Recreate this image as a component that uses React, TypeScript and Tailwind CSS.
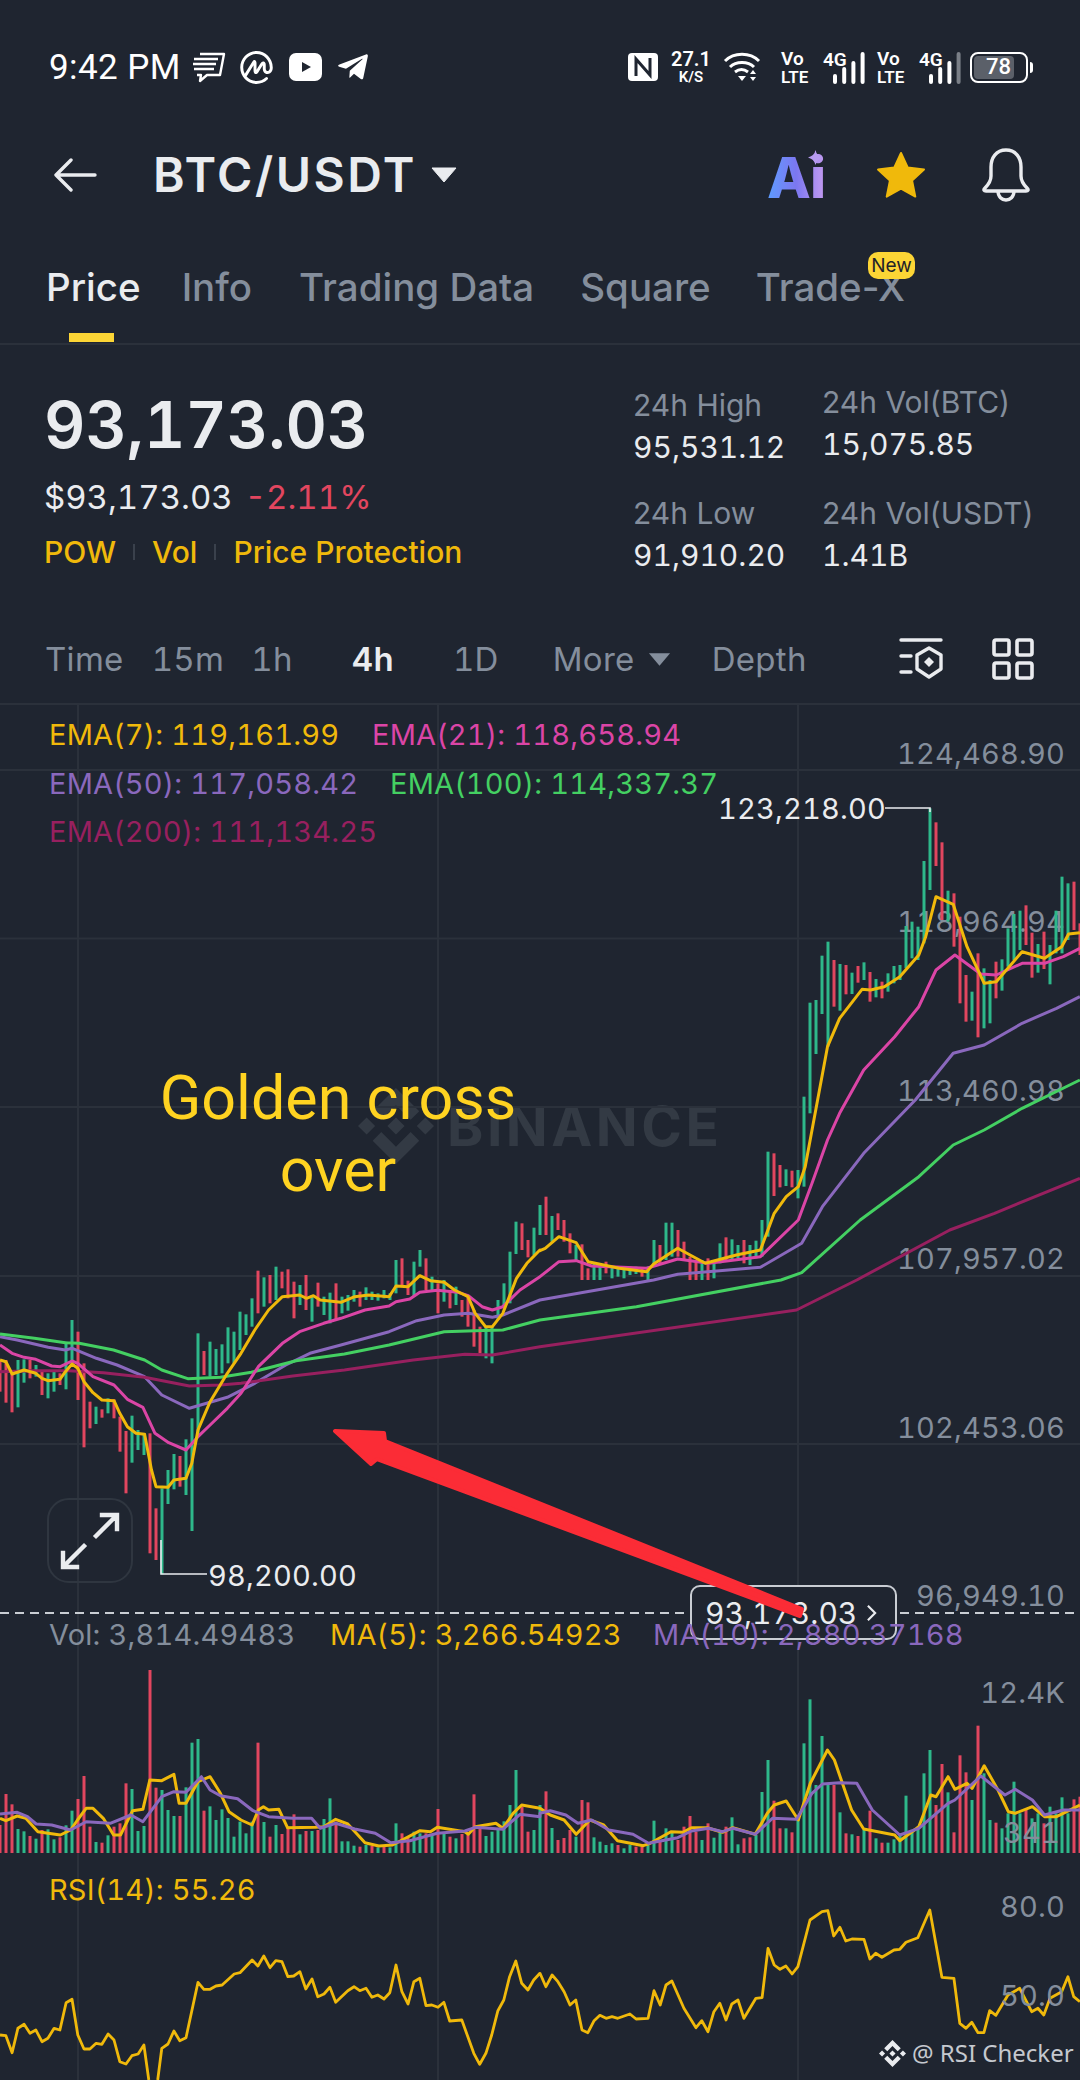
import { SiBinance, SiCoinmarketcap } from 'react-icons/si';
import { FaTelegramPlane } from 'react-icons/fa';

// candle bars are [top, bottom], negative top = red. Values are read off the crops
// so they go through a scale below instead of being raw page pixels
const candlesLeft: number[][] = [
  [-630, 725], [-630, 758], [-670, 787], [630, 772], [628, 698], [-630, 685], [645, 680], [-660, 735], [670, 745], [660, 725],
  [-670, 705], [575, 718], [510, 640], [-545, 750], [-640, 892], [-755, 835], [770, 822], [-778, 803], [745, 790], [-748, 805],
  [-800, 905], [-843, 1030], [797, 938], [840, 900], [850, 915], [-850, 1210], [-1075, 1230], [1015, 1273], [960, 1062], [912, 1018],
  [-918, 1010], [868, 1035], [805, 1143], [550, 860], [-603, 675], [575, 680], [597, 675], [583, 670], [532, 640], [545, 640],
  [485, 600], [493, 555], [445, 530], [-362, 490], [382, 470], [-375, 460], [350, 450], [-365, 415], [-358, 445], [-395, 505],
  [405, 465], [-375, 480], [435, 515], [-398, 470], [440, 495], [428, 520], [-400, 510], [440, 490], [435, 482], [420, 455],
  [-425, 470], [412, 450], [425, 450], [430, 452], [420, 445], [430, 450], [330, 430], [-325, 405], [-392, 435], [335, 440],
  [300, 350], [-325, 420], [380, 425], [-400, 490], [390, 455], [-420, 475], [410, 465], [-450, 500], [-440, 530], [-480, 590],
  [-530, 610], [530, 625], [530, 640], [450, 510], [400, 470], [305, 460], [215, 312], [-220, 300], [-270, 322], [233, 315],
];

const candlesRight: number[][] = [
  [1275, 1365], [-1250, 1365], [1308, 1385], [-1300, 1350], [-1320, 1385], [-1360, 1420], [1395, 1440], [-1393, 1500], [-1465, 1500], [1450, 1500],
  [1450, 1500], [-1445, 1480], [1460, 1495], [1460, 1490], [1465, 1495], [1460, 1485], [1460, 1482], [-1465, 1490], [1460, 1500], [1380, 1460],
  [-1395, 1455], [1328, 1440], [1328, 1430], [-1350, 1430], [-1385, 1440], [-1430, 1500], [-1445, 1500], [1440, 1500], [-1435, 1500], [1440, 1495],
  [1390, 1450], [-1372, 1445], [1378, 1440], [1395, 1435], [-1380, 1450], [1395, 1455], [1382, 1435], [1320, 1430], [1115, 1370], [-1120, 1248],
  [-1155, 1222], [1168, 1218], [-1172, 1222], [1170, 1255], [950, 1220], [668, 1000], [660, 822], [527, 702], [485, 800], [-540, 680],
  [552, 692], [-555, 643], [578, 642], [-558, 608], [547, 600], [-576, 665], [597, 652], [-605, 655], [580, 635], [558, 610],
  [555, 600], [438, 565], [425, 535], [440, 540], [243, 490], [85, 330], [-127, 258], [-187, 420], [332, 425], [-340, 500],
  [-410, 670], [-585, 725], [635, 722], [-520, 772], [565, 745], [600, 730], [-545, 655], [538, 632], [445, 560], [402, 540],
  [392, 510], [-376, 495], [-458, 593], [492, 578], [-455, 567], [495, 613], [392, 520], [290, 520], [310, 480], [-305, 450], [-430, 525],
];

const volumes = [
  -675, -582, -613, 687, 694, -708, 716, -690, 688, 718,
  -712, 676, 632, -597, -528, -680, 726, -728, 706, -680,
  -670, -550, 567, 693, 678, -210, -563, 570, 630, 648,
  -648, 562, 428, 417, -632, 619, 660, 628, 654, 710,
  665, 700, 665, -428, 666, -710, 675, -702, -680, -643,
  703, -693, 693, -690, 657, 595, -665, 724, 724, 737,
  -740, 735, -738, 742, -740, 742, 670, -700, -712, 695,
  700, -700, 705, -627, 700, -710, 715, -702, -705, -583,
  -680, 708, 695, 690, 664, 615, 510, -620, -695, 690,
  615, -574, 684, -720, -714, -690, 710, -600, -607, 712,
  725, 735, 730, -735, 745, 735, -740, -740, 735, 662,
  -720, 685, 695, -720, -680, -648, -695, 720, -670, 713,
  690, -680, 652, 733, -715, -712, 705, 576, 480, -602,
  -685, 685, -697, 660, 430, 298, 555, 408, 555, -555,
  637, -700, 703, -708, 690, -632, 715, -728, 728, 718,
  705, 587, 690, 680, 520, 450, -615, -492, 577, -697,
  -466, -517, 600, -377, 520, 660, -668, 685, 640, 545,
  640, -630, 655, 640, -670, 620, 640, 592, 640, -598, -590,
];

const scale = 2.904;
const leftY = (v: number) => 1150 + v / 3;
const rightY = (v: number) => 780 + v / 3;
const lowY = (v: number) => 1600 + v / 3;

type Pts = number[];

function toPoints(pts: Pts, baseX: number, mapY: (v: number) => number) {
  const out: string[] = [];
  for (let i = 0; i < pts.length; i += 2) {
    out.push(`${(baseX + pts[i] / scale).toFixed(1)},${mapY(pts[i + 1]).toFixed(1)}`);
  }
  return out.join(' ');
}

const emaLines = [
  {
    color: '#8a68bd',
    left: [0, 560, 50, 570, 140, 592, 190, 600, 210, 595, 280, 625, 340, 645, 420, 680, 470, 735, 550, 775, 600, 760, 660, 742, 740, 700, 830, 645, 900, 610, 990, 585, 1130, 545, 1210, 512, 1290, 495, 1360, 490, 1430, 502, 1460, 495, 1568, 450],
    right: [330, 1500, 400, 1483, 640, 1462, 760, 1390, 820, 1280, 940, 1120, 1090, 960, 1200, 820, 1290, 795, 1400, 730, 1500, 685, 1568, 650],
  },
  {
    color: '#44d062',
    left: [0, 552, 100, 565, 190, 578, 230, 580, 330, 600, 420, 630, 470, 660, 545, 686, 640, 682, 730, 667, 860, 632, 1000, 612, 1130, 585, 1290, 545, 1380, 542, 1460, 540, 1568, 510],
    right: [280, 1580, 700, 1500, 760, 1478, 930, 1320, 1100, 1190, 1200, 1095, 1290, 1050, 1400, 985, 1568, 900],
  },
  {
    color: '#97205f',
    left: [0, 665, 100, 662, 200, 662, 300, 668, 420, 682, 550, 708, 640, 705, 700, 700, 850, 678, 1000, 660, 1200, 630, 1350, 613, 1430, 615, 1568, 590],
    right: [745, 1590, 920, 1500, 1190, 1350, 1320, 1300, 1568, 1195],
  },
  {
    color: '#db45a6',
    left: [0, 585, 35, 610, 70, 622, 104, 628, 150, 648, 175, 650, 209, 633, 226, 640, 270, 680, 331, 705, 370, 748, 415, 772, 450, 850, 490, 878, 540, 900, 575, 860, 610, 825, 660, 775, 700, 730, 750, 650, 820, 580, 870, 545, 940, 520, 990, 505, 1060, 480, 1130, 468, 1150, 455, 1190, 447, 1219, 427, 1270, 421, 1330, 427, 1360, 437, 1400, 470, 1430, 480, 1460, 470, 1510, 420, 1568, 380],
    right: [0, 1490, 55, 1445, 105, 1442, 150, 1458, 310, 1465, 400, 1437, 490, 1450, 640, 1430, 750, 1320, 790, 1210, 835, 1080, 870, 1000, 940, 870, 1030, 770, 1100, 680, 1150, 570, 1205, 525, 1280, 582, 1325, 585, 1400, 550, 1465, 550, 1520, 530, 1568, 505],
  },
  {
    color: '#f0b90b',
    left: [0, 630, 17, 635, 35, 672, 70, 660, 104, 670, 122, 685, 139, 692, 174, 688, 190, 665, 209, 642, 226, 655, 244, 695, 270, 728, 296, 750, 331, 752, 348, 790, 370, 830, 395, 850, 420, 853, 440, 960, 453, 1010, 488, 1012, 505, 990, 540, 985, 557, 940, 575, 840, 610, 755, 660, 670, 700, 610, 740, 540, 780, 480, 820, 440, 870, 435, 890, 445, 910, 437, 930, 450, 990, 457, 1030, 440, 1070, 435, 1130, 440, 1150, 408, 1185, 410, 1219, 377, 1250, 392, 1290, 397, 1320, 420, 1359, 440, 1380, 490, 1410, 530, 1430, 530, 1460, 490, 1500, 385, 1530, 340, 1568, 300],
    right: [0, 1412, 15, 1405, 55, 1370, 105, 1388, 140, 1445, 230, 1465, 310, 1475, 330, 1452, 400, 1405, 480, 1450, 570, 1425, 640, 1410, 680, 1300, 715, 1250, 750, 1220, 770, 1160, 835, 800, 870, 715, 935, 628, 960, 630, 1000, 620, 1045, 590, 1100, 525, 1120, 470, 1150, 350, 1200, 373, 1240, 500, 1290, 610, 1325, 605, 1400, 515, 1465, 535, 1515, 500, 1535, 462, 1568, 458],
  },
];

const ma5Left = [0, 655, 17, 662, 50, 648, 75, 655, 110, 695, 140, 700, 175, 705, 205, 690, 225, 660, 250, 625, 270, 625, 300, 655, 330, 705, 350, 705, 385, 632, 415, 628, 435, 540, 470, 542, 505, 523, 520, 610, 540, 610, 575, 545, 610, 530, 640, 580, 665, 635, 700, 660, 732, 675, 750, 630, 765, 620, 780, 630, 810, 628, 835, 683, 915, 682, 940, 680, 975, 658, 1010, 672, 1060, 728, 1100, 738, 1140, 735, 1220, 692, 1250, 695, 1270, 682, 1350, 695, 1360, 703, 1380, 680, 1440, 670, 1460, 685, 1490, 640, 1515, 615, 1568, 625];
const ma5Right = [0, 625, 30, 645, 70, 660, 105, 703, 145, 660, 185, 675, 225, 722, 300, 737, 320, 730, 380, 695, 415, 697, 440, 683, 485, 683, 530, 697, 560, 683, 625, 703, 660, 640, 680, 615, 715, 603, 750, 660, 785, 550, 835, 450, 855, 480, 905, 630, 940, 687, 1030, 705, 1045, 722, 1100, 680, 1135, 585, 1150, 590, 1185, 530, 1205, 568, 1240, 550, 1255, 565, 1290, 497, 1330, 570, 1360, 635, 1380, 640, 1430, 620, 1465, 650, 1500, 650, 1568, 615];
const ma10Left = [0, 642, 50, 637, 80, 650, 105, 672, 150, 675, 205, 690, 250, 665, 320, 670, 380, 645, 415, 665, 470, 590, 505, 575, 540, 577, 585, 530, 610, 570, 640, 587, 690, 596, 735, 632, 780, 650, 850, 655, 905, 655, 930, 685, 975, 670, 1030, 687, 1090, 700, 1135, 728, 1190, 722, 1270, 700, 1350, 693, 1380, 682, 1460, 688, 1510, 643, 1568, 650];
const ma10Right = [0, 640, 30, 632, 75, 645, 110, 670, 150, 660, 200, 690, 270, 703, 315, 730, 400, 713, 440, 693, 490, 685, 530, 695, 560, 685, 625, 703, 675, 655, 745, 658, 790, 580, 820, 552, 870, 548, 920, 550, 965, 630, 1045, 705, 1100, 685, 1185, 610, 1205, 600, 1280, 528, 1350, 585, 1380, 568, 1430, 600, 1465, 645, 1520, 630, 1568, 630];
const rsiLeft = [0, 1305, 17, 1307, 35, 1358, 52, 1285, 70, 1273, 87, 1300, 104, 1290, 122, 1325, 139, 1315, 157, 1285, 174, 1290, 192, 1208, 209, 1198, 226, 1305, 244, 1347, 261, 1347, 279, 1330, 296, 1333, 314, 1302, 331, 1320, 348, 1385, 366, 1392, 383, 1367, 401, 1362, 418, 1335, 432, 1440, 445, 1500, 458, 1440, 470, 1345, 488, 1332, 505, 1293, 522, 1322, 540, 1313, 575, 1147, 592, 1168, 610, 1168, 627, 1158, 645, 1155, 680, 1122, 697, 1118, 732, 1080, 749, 1098, 766, 1068, 784, 1103, 801, 1082, 819, 1085, 836, 1130, 853, 1128, 871, 1115, 888, 1167, 906, 1137, 923, 1190, 941, 1182, 958, 1162, 975, 1207, 1010, 1172, 1028, 1160, 1045, 1172, 1063, 1165, 1080, 1192, 1097, 1185, 1115, 1197, 1132, 1178, 1150, 1095, 1167, 1175, 1185, 1212, 1202, 1145, 1219, 1135, 1237, 1217, 1254, 1215, 1272, 1222, 1289, 1207, 1306, 1263, 1341, 1260, 1376, 1360, 1393, 1393, 1411, 1360, 1428, 1305, 1446, 1232, 1463, 1200, 1480, 1130, 1498, 1083, 1515, 1150, 1533, 1170, 1550, 1140, 1568, 1120];
const rsiRight = [0, 1120, 17, 1160, 35, 1125, 52, 1145, 70, 1175, 87, 1215, 104, 1200, 122, 1290, 139, 1298, 157, 1262, 174, 1246, 192, 1255, 209, 1250, 226, 1255, 261, 1242, 279, 1257, 314, 1255, 331, 1172, 349, 1215, 366, 1155, 383, 1143, 418, 1225, 453, 1283, 470, 1262, 488, 1295, 505, 1235, 522, 1210, 540, 1260, 557, 1212, 575, 1200, 592, 1255, 627, 1195, 645, 1193, 662, 1045, 680, 1095, 697, 1108, 714, 1098, 732, 1122, 749, 1100, 784, 960, 819, 935, 836, 932, 853, 1008, 871, 982, 888, 1023, 906, 1017, 941, 1018, 958, 1077, 975, 1060, 993, 1072, 1028, 1050, 1045, 1048, 1063, 1027, 1097, 1013, 1132, 930, 1167, 1132, 1202, 1135, 1219, 1270, 1237, 1285, 1254, 1267, 1272, 1298, 1289, 1298, 1306, 1232, 1324, 1246, 1359, 1185, 1393, 1165, 1428, 1235, 1446, 1225, 1463, 1245, 1481, 1195, 1515, 1175, 1533, 1130, 1550, 1190, 1568, 1205];

const GREEN = '#2eb88a';
const RED = '#e2465f';

function StatusBar() {
  return (
    <div className="flex h-[134px] items-center justify-between pl-[49px] pr-[52px] font-['Roboto',sans-serif] text-white">
      <div className="flex items-center">
        <span className="text-[35px] leading-none tracking-[0.4px]">9:42 PM</span>
        <svg viewBox="0 0 34 32" className="ml-[11px] h-[32px] w-[34px]" fill="none" stroke="white" strokeWidth="2.4">
          <path d="M8 3h24l-4 21H15l-7 6 1-6H5" strokeLinejoin="round" />
          <path d="M2 8h24M1 13h23M2 18h20" />
        </svg>
        <SiCoinmarketcap className="ml-[14px] h-[33px] w-[33px]" />
        <svg viewBox="0 0 33 28" className="ml-[16px] h-[28px] w-[33px]">
          <rect width="33" height="28" rx="7" fill="white" />
          <path d="M13 9l9 5-9 5z" fill="#1f2530" />
        </svg>
        <FaTelegramPlane className="ml-[14px] h-[34px] w-[34px]" />
      </div>
      <div className="flex items-center">
        <svg viewBox="0 0 30 28" className="h-[28px] w-[30px]">
          <rect width="30" height="28" rx="4" fill="white" />
          <path d="M8 23V6l14 16V5" fill="none" stroke="#1f2530" strokeWidth="3" />
        </svg>
        <div className="ml-[14px] flex w-[38px] flex-col items-center font-semibold leading-none">
          <span className="text-[20px] leading-[20px]">27.1</span>
          <span className="text-[15px] leading-[17px]">K/S</span>
        </div>
        <svg viewBox="0 0 38 30" className="ml-[13px] h-[30px] w-[38px]" fill="none" stroke="white" strokeWidth="3">
          <path d="M2 9c9-9 25-9 34 0M7 15c6-6 18-6 24 0M12 20c4-3 9-3 13 0" />
          <path d="M15 24h8l-4 5z" fill="white" stroke="none" />
          <path d="M27 22l3-4 3 4zM27 25h6l-3 4z" fill="white" stroke="none" />
        </svg>
        <Signal className="ml-[20px]" level={4} />
        <Signal className="ml-[12px]" level={3} />
        <div className="relative ml-[9px] flex h-[31px] w-[58px] items-center rounded-[8px] border-2 border-white p-[2px]">
          <div className="flex h-full w-[40px] items-center justify-center rounded-[4px] bg-[#5b6069] text-[22px] font-medium leading-none">
            <span className="ml-[9px]">78</span>
          </div>
          <span className="absolute -right-[7px] top-[8px] h-[11px] w-[3px] rounded-r-sm bg-white" />
        </div>
      </div>
    </div>
  );
}

function Signal({ level, className }: { level: number; className: string }) {
  const tops = [76, 69, 63, 54];
  return (
    <div className={`flex items-center ${className}`}>
      <div className="flex w-[30px] flex-col font-semibold leading-none">
        <span className="text-[19px] leading-[19px]">Vo</span>
        <span className="text-[17px] leading-[18px]">LTE</span>
      </div>
      <div className="relative ml-[12px] h-[34px] w-[42px]">
        <span className="absolute left-0 top-0 text-[19px] font-semibold leading-[20px]">4G</span>
        <svg viewBox="0 0 42 34" className="absolute inset-0 h-[34px] w-[42px]">
          {tops.map((t, i) => (
            <line
              key={t}
              x1={12 + i * 9.2}
              x2={12 + i * 9.2}
              y1={t - 50}
              y2={32}
              stroke={i < level ? 'white' : '#7a7f87'}
              strokeWidth="4"
              strokeLinecap="round"
            />
          ))}
        </svg>
      </div>
    </div>
  );
}

function TopBar() {
  return (
    <div className="flex h-[82px] items-center pl-[53px] pr-[49px]">
      <svg viewBox="0 0 44 34" className="h-[34px] w-[44px]" fill="none" stroke="#eaecef" strokeWidth="3.4" strokeLinecap="round" strokeLinejoin="round">
        <path d="M42 17H3M18 2L3 17l15 15" />
      </svg>
      <span className="ml-[56px] text-[48px] font-semibold leading-none tracking-[2.5px] text-[#eaecef]">BTC/USDT</span>
      <svg viewBox="0 0 26 16" className="ml-[14px] h-[16px] w-[26px]">
        <path d="M1 1h24L13 15z" fill="#eaecef" stroke="#eaecef" strokeLinejoin="round" />
      </svg>
      <div className="relative ml-auto h-[48px] w-[56px]">
        <span className="absolute bottom-[-7px] left-0 bg-gradient-to-r from-[#5a9cff] via-[#7b77f0] to-[#c49af0] bg-clip-text text-[57px] font-extrabold leading-none tracking-[-1px] text-transparent">
          Ai
        </span>
        <svg viewBox="0 0 16 16" className="absolute -top-[1px] left-[41px] h-[15px] w-[15px]">
          <path d="M8 0q1 6 8 8-7 2-8 8-1-6-8-8 7-2 8-8z" fill="#b79bf0" />
        </svg>
      </div>
      <svg viewBox="0 0 50 48" className="ml-[53px] h-[48px] w-[50px]">
        <path d="M25 2l6.8 14.6 16.2 2-11.9 11 3.2 16L25 37.7 10.700 45.600l3.200-16L2 18.600l16.200-2z" fill="#f0b90b" stroke="#f0b90b" strokeWidth="2" strokeLinejoin="round" />
      </svg>
      <svg viewBox="0 0 50 54" className="ml-[55px] h-[54px] w-[50px]" fill="none" stroke="#eaecef" strokeWidth="3.4" strokeLinejoin="round">
        <path d="M25 2C15 2 10 10 10 19v9c0 5-2 8-6 12-2 2-1 3 1 3h40c2 0 3-1 1-3-4-4-6-7-6-12v-9c0-9-5-17-15-17z" />
        <path d="M17 43c0 6 4 9 8 9s8-3 8-9" />
      </svg>
    </div>
  );
}

function Tabs() {
  return (
    <div className="relative flex h-[129px] items-start border-b-2 border-[#2b313b] pl-[46px] pt-[48px] text-[38.5px] font-medium leading-[46px] text-[#848e9c]">
      <span className="relative text-[#eaecef]">
        Price
        <span className="absolute left-[23px] top-[69px] h-[9px] w-[45px] bg-[#fcd535]" />
      </span>
      <span className="ml-[41px]">Info</span>
      <span className="ml-[47px]">Trading Data</span>
      <span className="ml-[46px]">Square</span>
      <span className="ml-[45px]">Trade-X</span>
      <span className="absolute left-[868px] top-[36px] flex h-[27px] w-[47px] items-center justify-center rounded-[10px] bg-[#fcd535] text-[19px] font-normal leading-none text-[#1e2329]">
        New
      </span>
    </div>
  );
}

function Stat({ label, value, className = '' }: { label: string; value: string; className?: string }) {
  return (
    <div className="flex flex-col">
      <span className={`h-[42px] text-[#848e9c] leading-[42px] ${className}`}>{label}</span>
      <span className="h-[42px] leading-[42px] text-[#eaecef] tabular-nums">{value}</span>
    </div>
  );
}

function PriceStats() {
  return (
    <div className="flex h-[270px] pl-[44px]">
      <div className="w-[589px] pt-[40px]">
        <div className="text-[64px] font-semibold leading-[80px] text-[#eaecef] tabular-nums">93,173.03</div>
        <div className="flex h-[64px] items-center text-[33px] leading-none tabular-nums">
          <span className="text-[#eaecef]">$93,173.03</span>
          <span className="ml-[12px] text-[#e2465f]">-2.11%</span>
        </div>
        <div className="flex h-[46px] items-center text-[30px] font-medium leading-none text-[#f0b90b]">
          <span>POW</span>
          <span className="ml-[17px] h-[16px] w-[2px] bg-[#3a414c]" />
          <span className="ml-[17px]">Vol</span>
          <span className="ml-[17px] h-[16px] w-[2px] bg-[#3a414c]" />
          <span className="ml-[17px]">Price Protection</span>
        </div>
      </div>
      <div className="grid w-[447px] grid-cols-[189px_1fr] content-start gap-y-[24px] pt-[39px] text-[30px]">
        <Stat label="24h High" value="95,531.12" />
        <Stat label="24h Vol(BTC)" value="15,075.85" className="-mt-[3px]" />
        <Stat label="24h Low" value="91,910.20" />
        <Stat label="24h Vol(USDT)" value="1.41B" />
      </div>
    </div>
  );
}

function Intervals() {
  return (
    <div className="flex h-[90px] items-center border-b-2 border-[#2b313b] pl-[45px] text-[33px] leading-none tracking-[0.3px] text-[#848e9c] tabular-nums">
      <span>Time</span>
      <span className="ml-[28px]">15m</span>
      <span className="ml-[27px]">1h</span>
      <span className="ml-[59px] font-semibold text-[#eaecef]">4h</span>
      <span className="ml-[59px]">1D</span>
      <span className="ml-[54px]">More</span>
      <svg viewBox="0 0 24 15" className="ml-[13px] h-[15px] w-[23px]">
        <path d="M1 1h22L12 14z" fill="#848e9c" />
      </svg>
      <span className="ml-[41px]">Depth</span>
      <svg viewBox="0 0 44 42" className="ml-[92px] h-[42px] w-[44px]" fill="none" stroke="#eaecef" strokeWidth="3.4" strokeLinecap="round">
        <path d="M2 2h40M2 18h10M2 34h10" />
        <path d="M30 10l12 7v14l-12 8-12-8V17z" strokeLinejoin="round" />
        <path d="M30 19l5 5-5 5-5-5z" fill="#eaecef" stroke="none" />
      </svg>
      <svg viewBox="0 0 42 42" className="ml-[49px] h-[42px] w-[42px]" fill="none" stroke="#eaecef" strokeWidth="3.6">
        <rect x="2" y="2" width="15" height="15" rx="2" />
        <rect x="25" y="2" width="15" height="15" rx="2" />
        <rect x="2" y="25" width="15" height="15" rx="2" />
        <rect x="25" y="25" width="15" height="15" rx="2" />
      </svg>
    </div>
  );
}

function ChartDrawing() {
  return (
    <svg viewBox="0 705 1080 1375" className="absolute inset-0 h-[1375px] w-[1080px]">
      {[78, 438, 798].map((x) => (
        <line key={x} x1={x} x2={x} y1={705} y2={2080} stroke="#2b313b" strokeWidth="2" />
      ))}
      {[770, 938.5, 1107, 1276, 1444].map((y) => (
        <line key={y} x1={0} x2={1080} y1={y} y2={y} stroke="#2b313b" strokeWidth="2" />
      ))}

      {candlesLeft.map(([t, b], k) => (
        <rect key={k} x={6 * k - 1.5} y={leftY(Math.abs(t))} width="3" height={(b - Math.abs(t)) / 3} fill={t < 0 ? RED : GREEN} />
      ))}
      {candlesRight.map(([t, b], i) => (
        <rect key={i} x={540 + 6 * i - 1.5} y={rightY(Math.abs(t))} width="3" height={(b - Math.abs(t)) / 3} fill={t < 0 ? RED : GREEN} />
      ))}
      {emaLines.map((l) => (
        <polyline
          key={l.color}
          points={`${toPoints(l.left, 0, leftY)} ${toPoints(l.right, 540, rightY)}`}
          fill="none"
          stroke={l.color}
          strokeWidth="3"
          strokeLinejoin="round"
        />
      ))}

      <path d="M885 808h45v4M161 1540v34h46" fill="none" stroke="#eaecef" strokeWidth="1.6" />
      <line x1={0} x2={1080} y1={1613} y2={1613} stroke="#c9cdd3" strokeWidth="2" strokeDasharray="9 6" />

      {volumes.map((v, k) => (
        <rect key={k} x={6 * k - 1.5} y={lowY(Math.abs(v))} width="3" height={1853 - lowY(Math.abs(v))} fill={v < 0 ? RED : GREEN} />
      ))}
      <polyline points={`${toPoints(ma5Left, 0, lowY)} ${toPoints(ma5Right, 540, lowY)}`} fill="none" stroke="#f0b90b" strokeWidth="3" strokeLinejoin="round" />
      <polyline points={`${toPoints(ma10Left, 0, lowY)} ${toPoints(ma10Right, 540, lowY)}`} fill="none" stroke="#8a68bd" strokeWidth="3" strokeLinejoin="round" />
      <polyline points={`${toPoints(rsiLeft, 0, lowY)} ${toPoints(rsiRight, 540, lowY)}`} fill="none" stroke="#f0b90b" strokeWidth="2.8" strokeLinejoin="round" />
    </svg>
  );
}

function Chart() {
  const axis = ['124,468.90', '118,964.94', '113,460.98', '107,957.02', '102,453.06', '96,949.10'];
  return (
    <div className="relative flex-1 overflow-hidden text-[29px] tracking-[0.2px] tabular-nums">
      {/* axis text and watermark sit under the candles, as in the app */}
      <div className="absolute right-[15px] top-[-36px] flex flex-col items-end text-[#848e9c]">
        {axis.map((a) => (
          <span key={a} className="flex h-[168.5px] items-center">
            {a}
          </span>
        ))}
      </div>
      <div className="absolute left-[358px] top-[383px] flex items-center text-[#333a44]">
        <SiBinance className="h-[76px] w-[76px]" />
        <span className="ml-[13px] text-[55px] font-bold leading-none tracking-[3.5px]">BINANCE</span>
      </div>

      <ChartDrawing />

      <div className="absolute left-[49px] top-[6px] flex flex-col leading-[48.5px]">
        <div className="flex">
          <span className="w-[323px] text-[#f0b90b]">EMA(7): 119,161.99</span>
          <span className="text-[#db45a6]">EMA(21): 118,658.94</span>
        </div>
        <div className="flex">
          <span className="w-[341px] text-[#8a68bd]">EMA(50): 117,058.42</span>
          <span className="text-[#44d062]">EMA(100): 114,337.37</span>
        </div>
        <span className="text-[#97205f]">EMA(200): 111,134.25</span>
      </div>

      <span className="absolute left-[718px] top-[84px] leading-[40px] text-[#eaecef]">123,218.00</span>
      <span className="absolute left-[208px] top-[851px] leading-[40px] text-[#eaecef]">98,200.00</span>

      <div className="absolute left-[130px] top-[357px] w-[416px] text-center font-['Roboto',sans-serif] text-[61px] leading-[72px] tracking-normal text-[#ffd321]">
        Golden cross
        <br />
        over
      </div>

      <div className="absolute left-[47px] top-[793px] h-[85px] w-[86px] rounded-[22px] border-2 border-[#2f3640]">
        <svg viewBox="0 0 86 85" className="absolute -left-[2px] -top-[2px] h-[85px] w-[86px]" fill="none" stroke="#eaecef" strokeWidth="4.4" strokeLinecap="square">
          <path d="M55 17h15v14M69 18L49 38M16 55v14h14M17 68l20-20" />
        </svg>
      </div>

      <div className="absolute left-[690px] top-[880px] flex h-[55px] w-[207px] items-center rounded-[10px] border-2 border-[#c9cdd3] bg-[#1f2530] pl-[13px] text-[30px] leading-none tracking-normal text-[#eaecef]">
        93,173.03
        <svg viewBox="0 0 12 20" className="ml-[9px] h-[18px] w-[11px]" fill="none" stroke="#eaecef" strokeWidth="2.4">
          <path d="M2 2l8 8-8 8" />
        </svg>
      </div>

      {/* hand-drawn arrow from the screenshot, on top of the price tag */}
      <svg viewBox="0 705 1080 1375" className="absolute inset-0 h-[1375px] w-[1080px]">
        <polygon
          points="335,1431 384,1433 385,1441 802,1609 800,1616 377,1459 371,1464"
          fill="#fb2c36"
          stroke="#fb2c36"
          strokeWidth="4"
          strokeLinejoin="round"
        />
      </svg>

      <div className="absolute left-[49px] top-[911px] flex leading-[38px]">
        <span className="w-[281px] text-[#848e9c]">Vol: 3,814.49483</span>
        <span className="w-[323px] text-[#f0b90b]">MA(5): 3,266.54923</span>
        <span className="text-[#8a68bd]">MA(10): 2,880.37168</span>
      </div>
      <span className="absolute right-[15px] top-[968px] leading-[40px] text-[#848e9c]">12.4K</span>
      <span className="absolute right-[20px] top-[1108px] leading-[40px] text-[#848e9c]">341</span>
      <span className="absolute left-[49px] top-[1165px] leading-[40px] text-[#f0b90b]">RSI(14): 55.26</span>
      <span className="absolute right-[15px] top-[1182px] leading-[40px] text-[#848e9c]">80.0</span>
      <span className="absolute right-[15px] top-[1271px] leading-[40px] text-[#848e9c]">50.0</span>

      <div className="absolute left-[879px] top-[1331px] flex items-center font-['Noto_Sans',sans-serif] text-[24px] leading-[34px] tracking-normal text-[#c5c9cf]">
        <SiBinance className="h-[27px] w-[27px] text-[#eaecef]" />
        <span className="ml-[6px]">@ RSI Checker</span>
      </div>
    </div>
  );
}

export default function App() {
  return (
    <div className="flex h-[2080px] w-[1080px] flex-col overflow-hidden bg-[#1f2530] font-['Inter',sans-serif]">
      <StatusBar />
      <TopBar />
      <Tabs />
      <PriceStats />
      <Intervals />
      <Chart />
    </div>
  );
}
